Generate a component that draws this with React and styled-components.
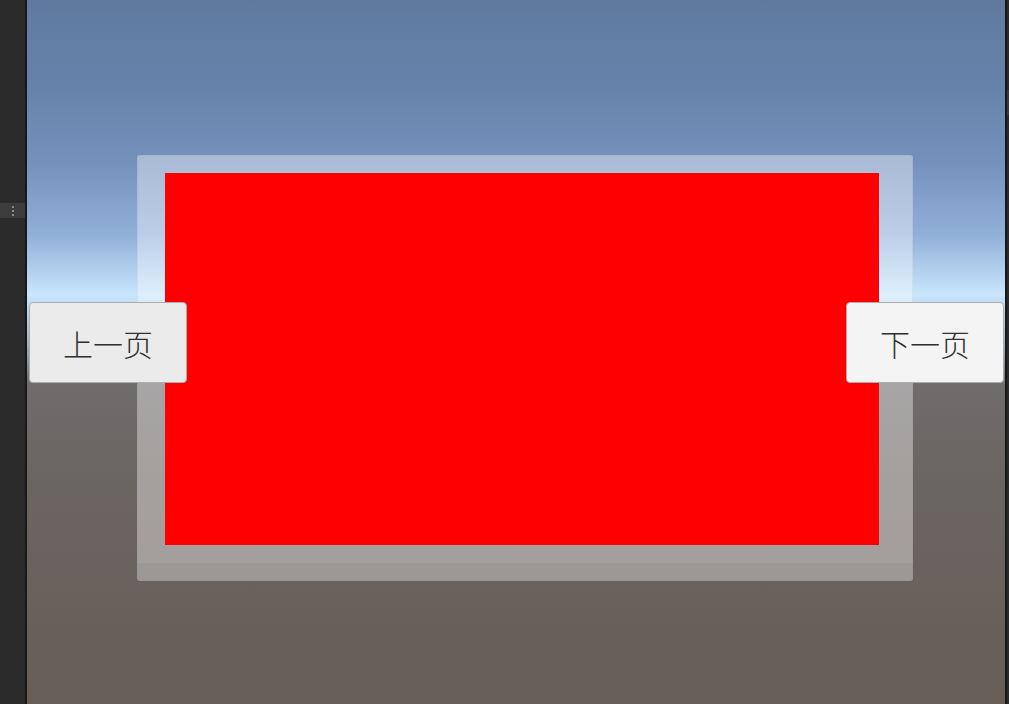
import * as React from 'react';
import styled, { createGlobalStyle } from 'styled-components';

const GlobalStyle = createGlobalStyle`
  html, body {
    margin: 0;
    padding: 0;
    background: #2a2a2a;
    overflow: hidden;
  }
  * {
    box-sizing: border-box;
  }
`;

const Editor = styled.div`
  display: flex;
  width: 1009px;
  height: 704px;
  background: #2a2a2a;
  font-family: "Noto Sans CJK SC", "Noto Sans", sans-serif;
`;

const Dock = styled.div`
  display: flex;
  flex-direction: column;
  width: ${props => props.width}px;
  background: #2a2a2a;
`;

const DockHandle = styled.div`
  display: flex;
  flex-direction: column;
  align-items: center;
  justify-content: center;
  gap: 2px;
  height: ${props => props.height}px;
  margin-top: ${props => props.top}px;
  background: ${props => props.color};
`;

const Dot = styled.span`
  width: 2px;
  height: 2px;
  background: #8c8c8c;
`;

const Splitter = styled.div`
  width: 2px;
  background: #181818;
`;

// skybox: blue fading to a pale horizon, then the grey ground plane
const Scene = styled.div`
  position: relative;
  flex: 1;
  display: flex;
  padding: 155px 92px 123px 110px;
  background: linear-gradient(
    to bottom,
    #607a9f 0px,
    #6683ab 90px,
    #7592bd 165px,
    #91b0d8 235px,
    #c8e6fd 295px,
    #a9b6c1 340px,
    #6f6c6c 385px,
    #6b6562 480px,
    #665e57 704px
  );
`;

const Panel = styled.div`
  flex: 1;
  display: flex;
  flex-direction: column;
  border-radius: 3px;
  background: rgba(255, 255, 255, 0.39);
  box-shadow: inset 0 0 0 1px rgba(120, 130, 150, 0.12);
  overflow: hidden;
`;

const Screen = styled.div`
  flex: 1;
  margin: 18px 34px 18px 28px;
  background: #ff0000;
`;

const PanelFooter = styled.div`
  height: 18px;
  background: rgba(0, 0, 0, 0.04);
`;

const NavBar = styled.div`
  position: absolute;
  top: 302px;
  left: 2px;
  right: 1px;
  display: flex;
  justify-content: space-between;
`;

const NavButton = styled.button`
  width: 158px;
  height: 81px;
  padding: 0;
  border: 1px solid #a9acb0;
  border-radius: 4px;
  background: ${props => props.bg};
  color: #303030;
  font-family: "Noto Sans CJK SC", "Noto Sans", sans-serif;
  font-size: 30px;
  font-weight: 300;
  line-height: 1;
  cursor: pointer;
`;

export default function App() {
  const [page, setPage] = React.useState(0);

  return (
    <>
      <GlobalStyle />
      <Editor>
        <Dock width={25}>
          <DockHandle top={203} height={15} color="#3c3c3c">
            <Dot />
            <Dot />
            <Dot />
          </DockHandle>
        </Dock>
        <Splitter />
        <Scene>
          <Panel>
            <Screen data-page={page} />
            <PanelFooter />
          </Panel>
          <NavBar>
            <NavButton bg="#ebebeb" onClick={() => setPage(p => Math.max(0, p - 1))}>
              上一页
            </NavButton>
            <NavButton bg="#f4f4f4" onClick={() => setPage(p => p + 1)}>
              下一页
            </NavButton>
          </NavBar>
        </Scene>
        <Splitter />
        <Dock width={2}>
          <DockHandle top={90} height={25} color="#3a3a3a" />
        </Dock>
      </Editor>
    </>
  );
}
